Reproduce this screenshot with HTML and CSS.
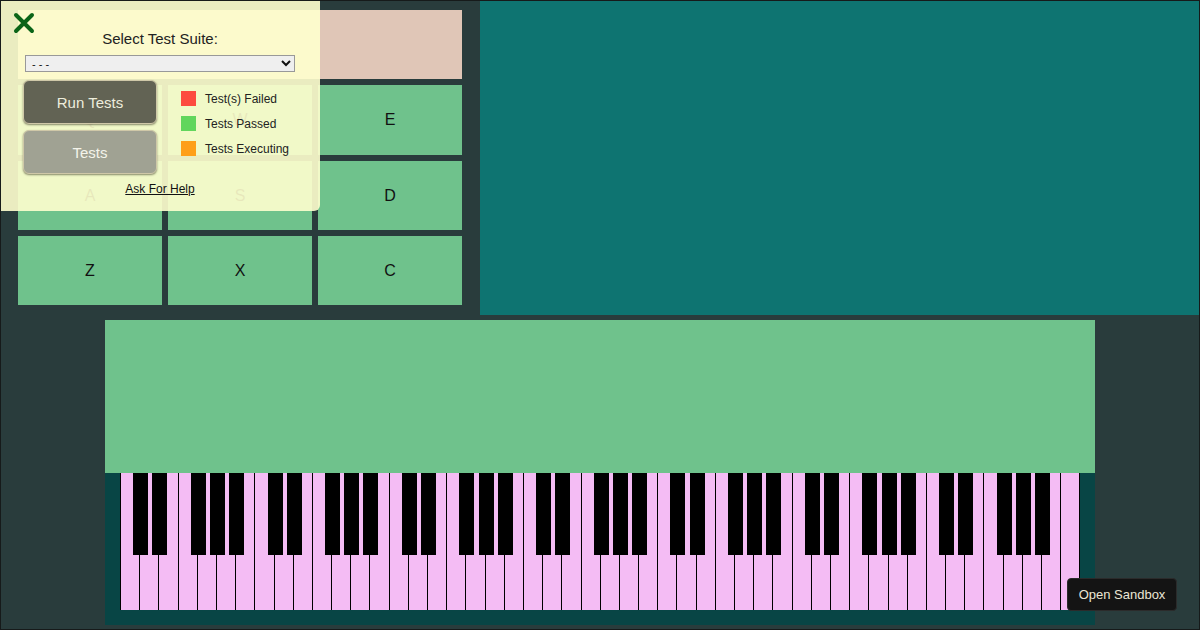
FILE: index.html
```html
<!DOCTYPE html>
<html lang="en">
<head>
  <meta charset="UTF-8" />
  <meta name="viewport" content="width=device-width, initial-scale=1.0" />
  <title>Drum Machine</title>
  <link rel="stylesheet" href="styles.css">
</head>
<body>
  <div class="app">
    <div class="top">
      <div class="pads">
        <div class="display"></div>
        <div class="pad">Q</div>
        <div class="pad">W</div>
        <div class="pad">E</div>
        <div class="pad">A</div>
        <div class="pad">S</div>
        <div class="pad">D</div>
        <div class="pad">Z</div>
        <div class="pad">X</div>
        <div class="pad">C</div>
      </div>
      <div class="screen"></div>
    </div>

    <div class="keyboard">
      <div class="keyboard-head"></div>
      <div class="keyboard-body">
        <div class="keys" id="keys"></div>
      </div>
    </div>

    <div class="test-panel">
      <svg class="close" width="22" height="22" viewBox="0 0 22 22">
        <path d="M3 3 L19 19 M19 3 L3 19" stroke="#0b6418" stroke-width="4" stroke-linecap="round" />
      </svg>
      <div class="suite-label">Select Test Suite:</div>
      <select class="suite-select">
        <option>- - -</option>
      </select>
      <div class="test-row">
        <div class="test-buttons">
          <button class="btn btn-run">Run Tests</button>
          <button class="btn btn-tests">Tests</button>
        </div>
        <ul class="legend">
          <li><span class="swatch failed"></span>Test(s) Failed</li>
          <li><span class="swatch passed"></span>Tests Passed</li>
          <li><span class="swatch running"></span>Tests Executing</li>
        </ul>
      </div>
      <a class="help" href="#">Ask For Help</a>
    </div>

    <button class="sandbox">Open Sandbox</button>
  </div>

  <script>
    const keys = document.getElementById("keys");
    const sharps = [true, true, false, true, true, true, false];
    for (let i = 0; i < 50; i++) {
      const key = document.createElement("div");
      key.className = "white";
      if (i < 49 && sharps[i % 7]) {
        const black = document.createElement("div");
        black.className = "black";
        key.appendChild(black);
      }
      keys.appendChild(key);
    }
  </script>
</body>
</html>
```

FILE: styles.css
```css
* {
  box-sizing: border-box;
}
body {
  margin: 0;
  font-family: "Liberation Sans", Arial, sans-serif;
}
.app {
  position: relative;
  width: 1200px;
  height: 630px;
  background: #293c3c;
  border: 1px solid #161a1a;
  overflow: hidden;
}
.top {
  display: flex;
  height: 314px;
}
.pads {
  width: 479px;
  padding: 9px 17px 0;
  display: grid;
  grid-template-columns: repeat(3, 144px);
  grid-template-rows: 69px 70px 69px 69px;
  gap: 6px;
}
.display {
  grid-column: 1 / 4;
  background: #e0c6b7;
}
.pad {
  background: #6fc28c;
  display: flex;
  align-items: center;
  justify-content: center;
  font-size: 16px;
  color: #111;
}
.screen {
  flex: 1;
  background: #0e7471;
}
.keyboard {
  width: 990px;
  margin: 5px 0 0 104px;
}
.keyboard-head {
  height: 153px;
  background: #6fc28c;
}
.keyboard-body {
  background: #084545;
  padding: 0 15px 15px;
}
.keys {
  display: flex;
  height: 137px;
  background: #f4bcf4;
}
.white {
  position: relative;
  flex: 1;
  border-left: 1px solid #000;
}
.white:last-child {
  border-right: 1px solid #000;
}
.black {
  position: absolute;
  top: 0;
  right: -9px;
  width: 15px;
  height: 82px;
  background: #000;
  z-index: 1;
}
.test-panel {
  position: absolute;
  top: -1px;
  left: -1px;
  width: 320px;
  height: 211px;
  background: rgba(255, 255, 206, 0.9);
  border-radius: 0 0 6px 0;
  z-index: 5;
}
.close {
  position: absolute;
  top: 12px;
  left: 13px;
}
.suite-label {
  text-align: center;
  padding-top: 30px;
  font-size: 15px;
  color: #222;
}
.suite-select {
  display: block;
  width: 270px;
  height: 17px;
  margin: 8px 0 0 25px;
  padding: 0 2px;
  font-family: "Liberation Sans", Arial, sans-serif;
  font-size: 11px;
  background: #efefef;
  border: 1px solid #999;
  border-radius: 0;
  color: #111;
}
.test-row {
  display: flex;
  margin-top: 8px;
  padding-left: 23px;
}
.test-buttons {
  display: flex;
  flex-direction: column;
  gap: 6px;
}
.btn {
  width: 134px;
  height: 44px;
  border: 1px solid #cfc8a8;
  border-radius: 6px;
  box-shadow: 0 1px 2px rgba(60, 60, 40, 0.6);
  font-family: "Liberation Sans", Arial, sans-serif;
  font-size: 15px;
  color: #ededdc;
}
.btn-run {
  background: #626354;
}
.btn-tests {
  background: #a0a293;
  color: #f4f4ea;
}
.legend {
  list-style: none;
  margin: 6px 0 0 24px;
  padding: 0;
}
.legend li {
  display: flex;
  align-items: center;
  height: 25px;
  font-size: 12px;
  color: #222;
}
.swatch {
  width: 15px;
  height: 15px;
  margin-right: 9px;
}
.failed {
  background: #fd4b3f;
}
.passed {
  background: #61d65c;
}
.running {
  background: #fe9f19;
}
.help {
  display: block;
  width: max-content;
  margin: 8px auto 0;
  font-size: 12px;
  color: #111;
}
.sandbox {
  position: absolute;
  right: 22px;
  bottom: 18px;
  width: 110px;
  height: 33px;
  background: #141414;
  border: 1px solid #2b2b2b;
  border-radius: 4px;
  font-family: "Liberation Sans", Arial, sans-serif;
  font-size: 13px;
  color: #ebe6d5;
}
```
